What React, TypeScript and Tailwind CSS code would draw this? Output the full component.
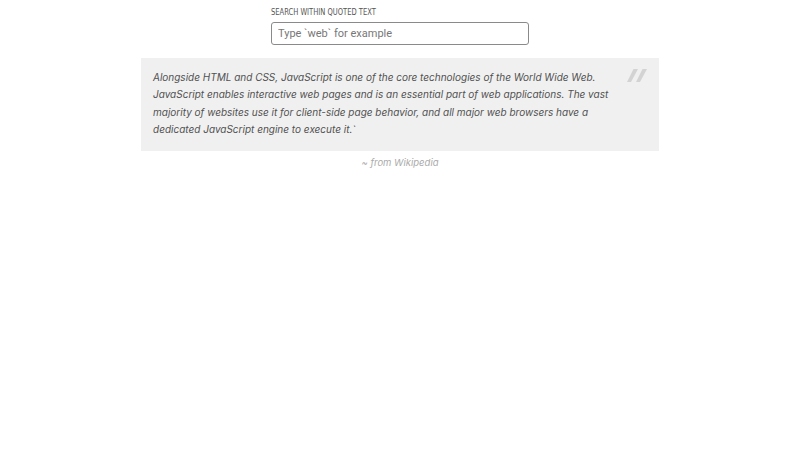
import React, { useState } from "react";

const QUOTE =
  "Alongside HTML and CSS, JavaScript is one of the core technologies of the World Wide Web. JavaScript enables interactive web pages and is an essential part of web applications. The vast majority of websites use it for client-side page behavior, and all major web browsers have a dedicated JavaScript engine to execute it.`";

const QuoteMark = () => (
  <svg width="20" height="13" viewBox="0 0 20 13" className="absolute right-[12px] top-[11px]" aria-hidden>
    <polygon points="6.5,0 11,0 4,13 0,13" fill="#d3d3d3" />
    <polygon points="15.5,0 20,0 13,13 9,13" fill="#d3d3d3" />
  </svg>
);

const App = () => {
  const [query, setQuery] = useState("");

  return (
    <div className="min-h-[450px] w-full bg-white font-['Inter',sans-serif]">
      <div className="flex flex-col items-center pt-[5px]">
        <div className="w-[258px]">
          <label className="block h-[14px] whitespace-nowrap">
            <span className="block w-max origin-left scale-x-[0.79] font-['DejaVu_Sans_Condensed',sans-serif] text-[9.5px] leading-[14px] uppercase text-[#555]">
              Search within quoted text
            </span>
          </label>
          <input
            value={query}
            onChange={(e) => setQuery(e.target.value)}
            placeholder="Type `web` for example"
            className="mt-[2px] h-[23px] w-full rounded-[3px] border border-[#8a8a8a] px-[6px] font-['Roboto',sans-serif] text-[11px] text-[#333] placeholder:text-[#777] outline-none"
          />
        </div>

        <div className="relative mt-[13px] w-[518px] bg-[#f0f0f0] px-3 pt-[11px] pb-[12px]">
          <p className="pr-[32px] text-[10px] leading-[17.4px] italic text-[#505050]">
            {QUOTE}
          </p>
          <QuoteMark />
        </div>

        <p className="mt-[5px] text-[9.5px] leading-[14px] italic text-[#aaa]">
          ~ from Wikipedia
        </p>
      </div>
    </div>
  );
};

export default App;
